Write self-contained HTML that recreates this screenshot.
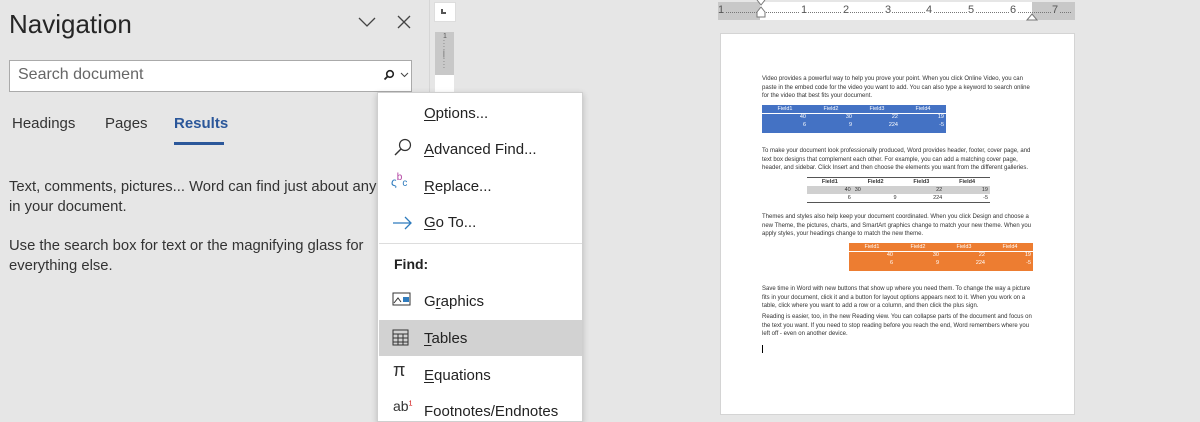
<!DOCTYPE html>
<html><head><style>
*{margin:0;padding:0;box-sizing:border-box}
body{width:1200px;height:415px;overflow:hidden;background:#e6e6e6;font-family:"Liberation Sans",sans-serif;position:relative}
.a{position:absolute}
.nav{left:0;top:0;width:430px;height:415px;background:#e6e6e6;border-right:1px solid #d6d6d6}
.p{font-size:14.8px;color:#333;line-height:20px;white-space:nowrap}
.menu{left:377px;top:92px;width:206px;height:330px;background:#fff;border:1px solid #cfcfcf;box-shadow:0 2px 6px rgba(0,0,0,.2)}
.mi{position:absolute;left:46px;font-size:15px;color:#222}
.mi u{text-decoration-thickness:1px;text-underline-offset:2px}
.doc{font-size:6px;color:#333;line-height:8.5px;font-family:"Liberation Sans",sans-serif}
table{border-collapse:collapse;font-size:5.5px}
td{padding:0 2px;height:8px;text-align:right}
.rn{position:absolute;top:4px;font-size:11px;color:#555}
.dots{position:absolute;top:12px;height:1px;border-top:1px dotted #777}
</style></head><body>
<div class="a nav">
  <div class="a" style="left:9px;top:9px;font-size:26px;color:#262626">Navigation</div>
  <svg class="a" style="left:357px;top:16px" width="20" height="12"><path d="M2 2 L10 10 L18 2" stroke="#444" stroke-width="1.3" fill="none"/></svg>
  <svg class="a" style="left:396px;top:14px" width="16" height="16"><path d="M2 2L14 14M14 2L2 14" stroke="#444" stroke-width="1.3"/></svg>
  <div class="a" style="left:9px;top:60px;width:403px;height:32px;background:#fff;border:1px solid #aaa"></div>
  <div class="a" style="left:18px;top:66px;font-size:16px;color:#666">Search document</div>
  <svg class="a" style="left:383px;top:69px" width="12" height="12"><circle cx="7" cy="5" r="3.3" stroke="#222" stroke-width="1.6" fill="none"/><path d="M4.5 7.5L1.5 10.5" stroke="#222" stroke-width="1.8"/></svg>
  <svg class="a" style="left:400px;top:72px" width="9" height="6"><path d="M1 1L4.5 4.5L8 1" stroke="#444" fill="none"/></svg>
  <div class="a" style="left:12px;top:115px;font-size:15px;color:#333">Headings</div>
  <div class="a" style="left:105px;top:115px;font-size:15px;color:#333">Pages</div>
  <div class="a" style="left:174px;top:115px;font-size:15px;color:#2b579a;font-weight:bold">Results</div>
  <div class="a" style="left:174px;top:142px;width:50px;height:3px;background:#2b579a"></div>
  <div class="a p" style="left:9px;top:177px">Text, comments, pictures... Word can find just about any<br>in your document.</div>
  <div class="a p" style="left:9px;top:236px">Use the search box for text or the magnifying glass for<br>everything else.</div>
</div>
<div class="a" style="left:434px;top:2px;width:22px;height:20px;background:#fff;border:1px solid #ddd"></div>
<div class="a" style="left:441px;top:9px;width:5px;height:5px;border-left:2px solid #555;border-bottom:2px solid #555"></div>
<div class="a" style="left:435px;top:32px;width:19px;height:43px;background:#c8c8c8"></div>
<div class="a" style="left:435px;top:75px;width:19px;height:340px;background:#fff"></div>
<div class="a" style="left:443px;top:34px;font-size:7px;color:#555;line-height:6px;width:4px">1<br>:<br>:<br>|<br>:<br>:</div>
<!-- ruler -->
<div class="a" style="left:718px;top:2px;width:357px;height:18px;background:#fff"></div>
<div class="a" style="left:718px;top:2px;width:42px;height:18px;background:#c8c8c8"></div>
<div class="a" style="left:1032px;top:2px;width:43px;height:18px;background:#c8c8c8"></div>
<div class="dots" style="left:726px;width:345px"></div>
<div class="rn" style="left:718px;background:#c8c8c8">1</div>
<div class="rn" style="left:800px;background:#fff;padding:0 1px">1</div>
<div class="rn" style="left:842px;background:#fff;padding:0 1px">2</div>
<div class="rn" style="left:884px;background:#fff;padding:0 1px">3</div>
<div class="rn" style="left:925px;background:#fff;padding:0 1px">4</div>
<div class="rn" style="left:967px;background:#fff;padding:0 1px">5</div>
<div class="rn" style="left:1009px;background:#fff;padding:0 1px">6</div>
<div class="rn" style="left:1051px;background:#c8c8c8;padding:0 1px">7</div>
<svg class="a" style="left:754px;top:0" width="14" height="26"><path d="M3 0L7 5L11 0M3 12L7 7L11 12V17H3Z" stroke="#777" fill="#fff"/></svg>
<svg class="a" style="left:1026px;top:12px" width="12" height="10"><path d="M1 8L6 2L11 8Z" stroke="#777" fill="#fff"/></svg>
<!-- page -->
<div class="a" style="left:720px;top:33px;width:355px;height:382px;background:#fff;border:1px solid #d4d4d4"></div>
<div class="a doc" style="left:762px;top:75px;width:276px">Video provides a powerful way to help you prove your point. When you click Online Video, you can paste in the embed code for the video you want to add. You can also type a keyword to search online for the video that best fits your document.</div>
<div class="a" style="left:762px;top:105px;width:184px;height:28px;background:#4472c4;color:#fff">
<table style="width:184px;color:#fff"><tr style="border-bottom:1px solid #fff"><td style="text-align:center">Field1</td><td style="text-align:center">Field2</td><td style="text-align:center">Field3</td><td style="text-align:center">Field4</td></tr><tr><td>40</td><td>30</td><td>22</td><td>19</td></tr><tr><td>6</td><td>9</td><td>224</td><td>-5</td></tr></table></div>
<div class="a doc" style="left:762px;top:147px;width:276px">To make your document look professionally produced, Word provides header, footer, cover page, and text box designs that complement each other. For example, you can add a matching cover page, header, and sidebar. Click Insert and then choose the elements you want from the different galleries.</div>
<div class="a" style="left:807px;top:177px;width:183px;border-top:1px solid #555;border-bottom:1px solid #555">
<table style="width:183px;color:#333"><tr><td style="text-align:center;font-weight:bold">Field1</td><td style="font-weight:bold;text-align:center">Field2</td><td style="font-weight:bold;text-align:center">Field3</td><td style="font-weight:bold;text-align:center">Field4</td></tr><tr style="background:#d0d0d0"><td>40</td><td style="text-align:left">30</td><td>22</td><td>19</td></tr><tr><td>6</td><td>9</td><td>224</td><td>-5</td></tr></table></div>
<div class="a doc" style="left:762px;top:213px;width:276px">Themes and styles also help keep your document coordinated. When you click Design and choose a new Theme, the pictures, charts, and SmartArt graphics change to match your new theme. When you apply styles, your headings change to match the new theme.</div>
<div class="a" style="left:849px;top:243px;width:184px;height:28px;background:#ed7d31">
<table style="width:184px;color:#fff"><tr style="border-bottom:1px solid #fff"><td style="text-align:center">Field1</td><td style="text-align:center">Field2</td><td style="text-align:center">Field3</td><td style="text-align:center">Field4</td></tr><tr><td>40</td><td>30</td><td>22</td><td>19</td></tr><tr><td>6</td><td>9</td><td>224</td><td>-5</td></tr></table></div>
<div class="a doc" style="left:762px;top:285px;width:276px">Save time in Word with new buttons that show up where you need them. To change the way a picture fits in your document, click it and a button for layout options appears next to it. When you work on a table, click where you want to add a row or a column, and then click the plus sign.</div>
<div class="a doc" style="left:762px;top:313px;width:276px">Reading is easier, too, in the new Reading view. You can collapse parts of the document and focus on the text you want. If you need to stop reading before you reach the end, Word remembers where you left off - even on another device.</div>
<div class="a" style="left:762px;top:345px;width:1px;height:8px;background:#000"></div>
<!-- menu -->
<div class="a menu">
  <div class="mi" style="top:12px"><u>O</u>ptions...</div>
  <svg class="a" style="left:14px;top:45px" width="22" height="20"><circle cx="13" cy="7" r="5.5" stroke="#333" stroke-width="1.2" fill="none"/><path d="M9 11L3 17" stroke="#333" stroke-width="1.4"/></svg>
  <div class="mi" style="top:48px"><u>A</u>dvanced Find...</div>
  <div class="a" style="left:13px;top:82px;font-size:12px;color:#2e7bbd">ς<span style="color:#b03fa0;font-size:10px;position:relative;top:-6px">b</span><span style="color:#2e7bbd;font-size:10px">c</span></div>
  <div class="mi" style="top:85px"><u>R</u>eplace...</div>
  <svg class="a" style="left:14px;top:123px" width="22" height="14"><path d="M1 7H19M13 1L19 7L13 13" stroke="#2e7bbd" stroke-width="1.3" fill="none"/></svg>
  <div class="mi" style="top:121px"><u>G</u>o To...</div>
  <div class="a" style="left:1px;top:150px;width:203px;height:1px;background:#ddd"></div>
  <div class="a" style="left:16px;top:163px;font-size:14px;font-weight:bold;color:#222">Find:</div>
  <svg class="a" style="left:14px;top:198px" width="20" height="18"><rect x="1" y="2" width="17" height="12" stroke="#333" fill="none"/><rect x="11" y="6" width="6" height="5" fill="#2e7bbd"/><path d="M2 12L6 7L9 11" stroke="#333" fill="none"/></svg>
  <div class="mi" style="top:200px">G<u>r</u>aphics</div>
  <div class="a" style="left:1px;top:227px;width:203px;height:36px;background:#d2d2d2"></div>
  <svg class="a" style="left:14px;top:236px" width="18" height="18"><rect x="1" y="1" width="15" height="15" stroke="#333" fill="none"/><path d="M1 5H16M1 9H16M1 13H16M6 5V16M11 5V16" stroke="#333"/></svg>
  <div class="mi" style="top:237px"><u>T</u>ables</div>
  <div class="a" style="left:15px;top:267px;font-size:18px;color:#333">π</div>
  <div class="mi" style="top:274px"><u>E</u>quations</div>
  <div class="a" style="left:15px;top:305px;font-size:14px;color:#333">ab<sup style="color:#c00;font-size:7px">1</sup></div>
  <div class="mi" style="top:310px">Footnotes/Endnotes</div>
</div>
</body></html>
